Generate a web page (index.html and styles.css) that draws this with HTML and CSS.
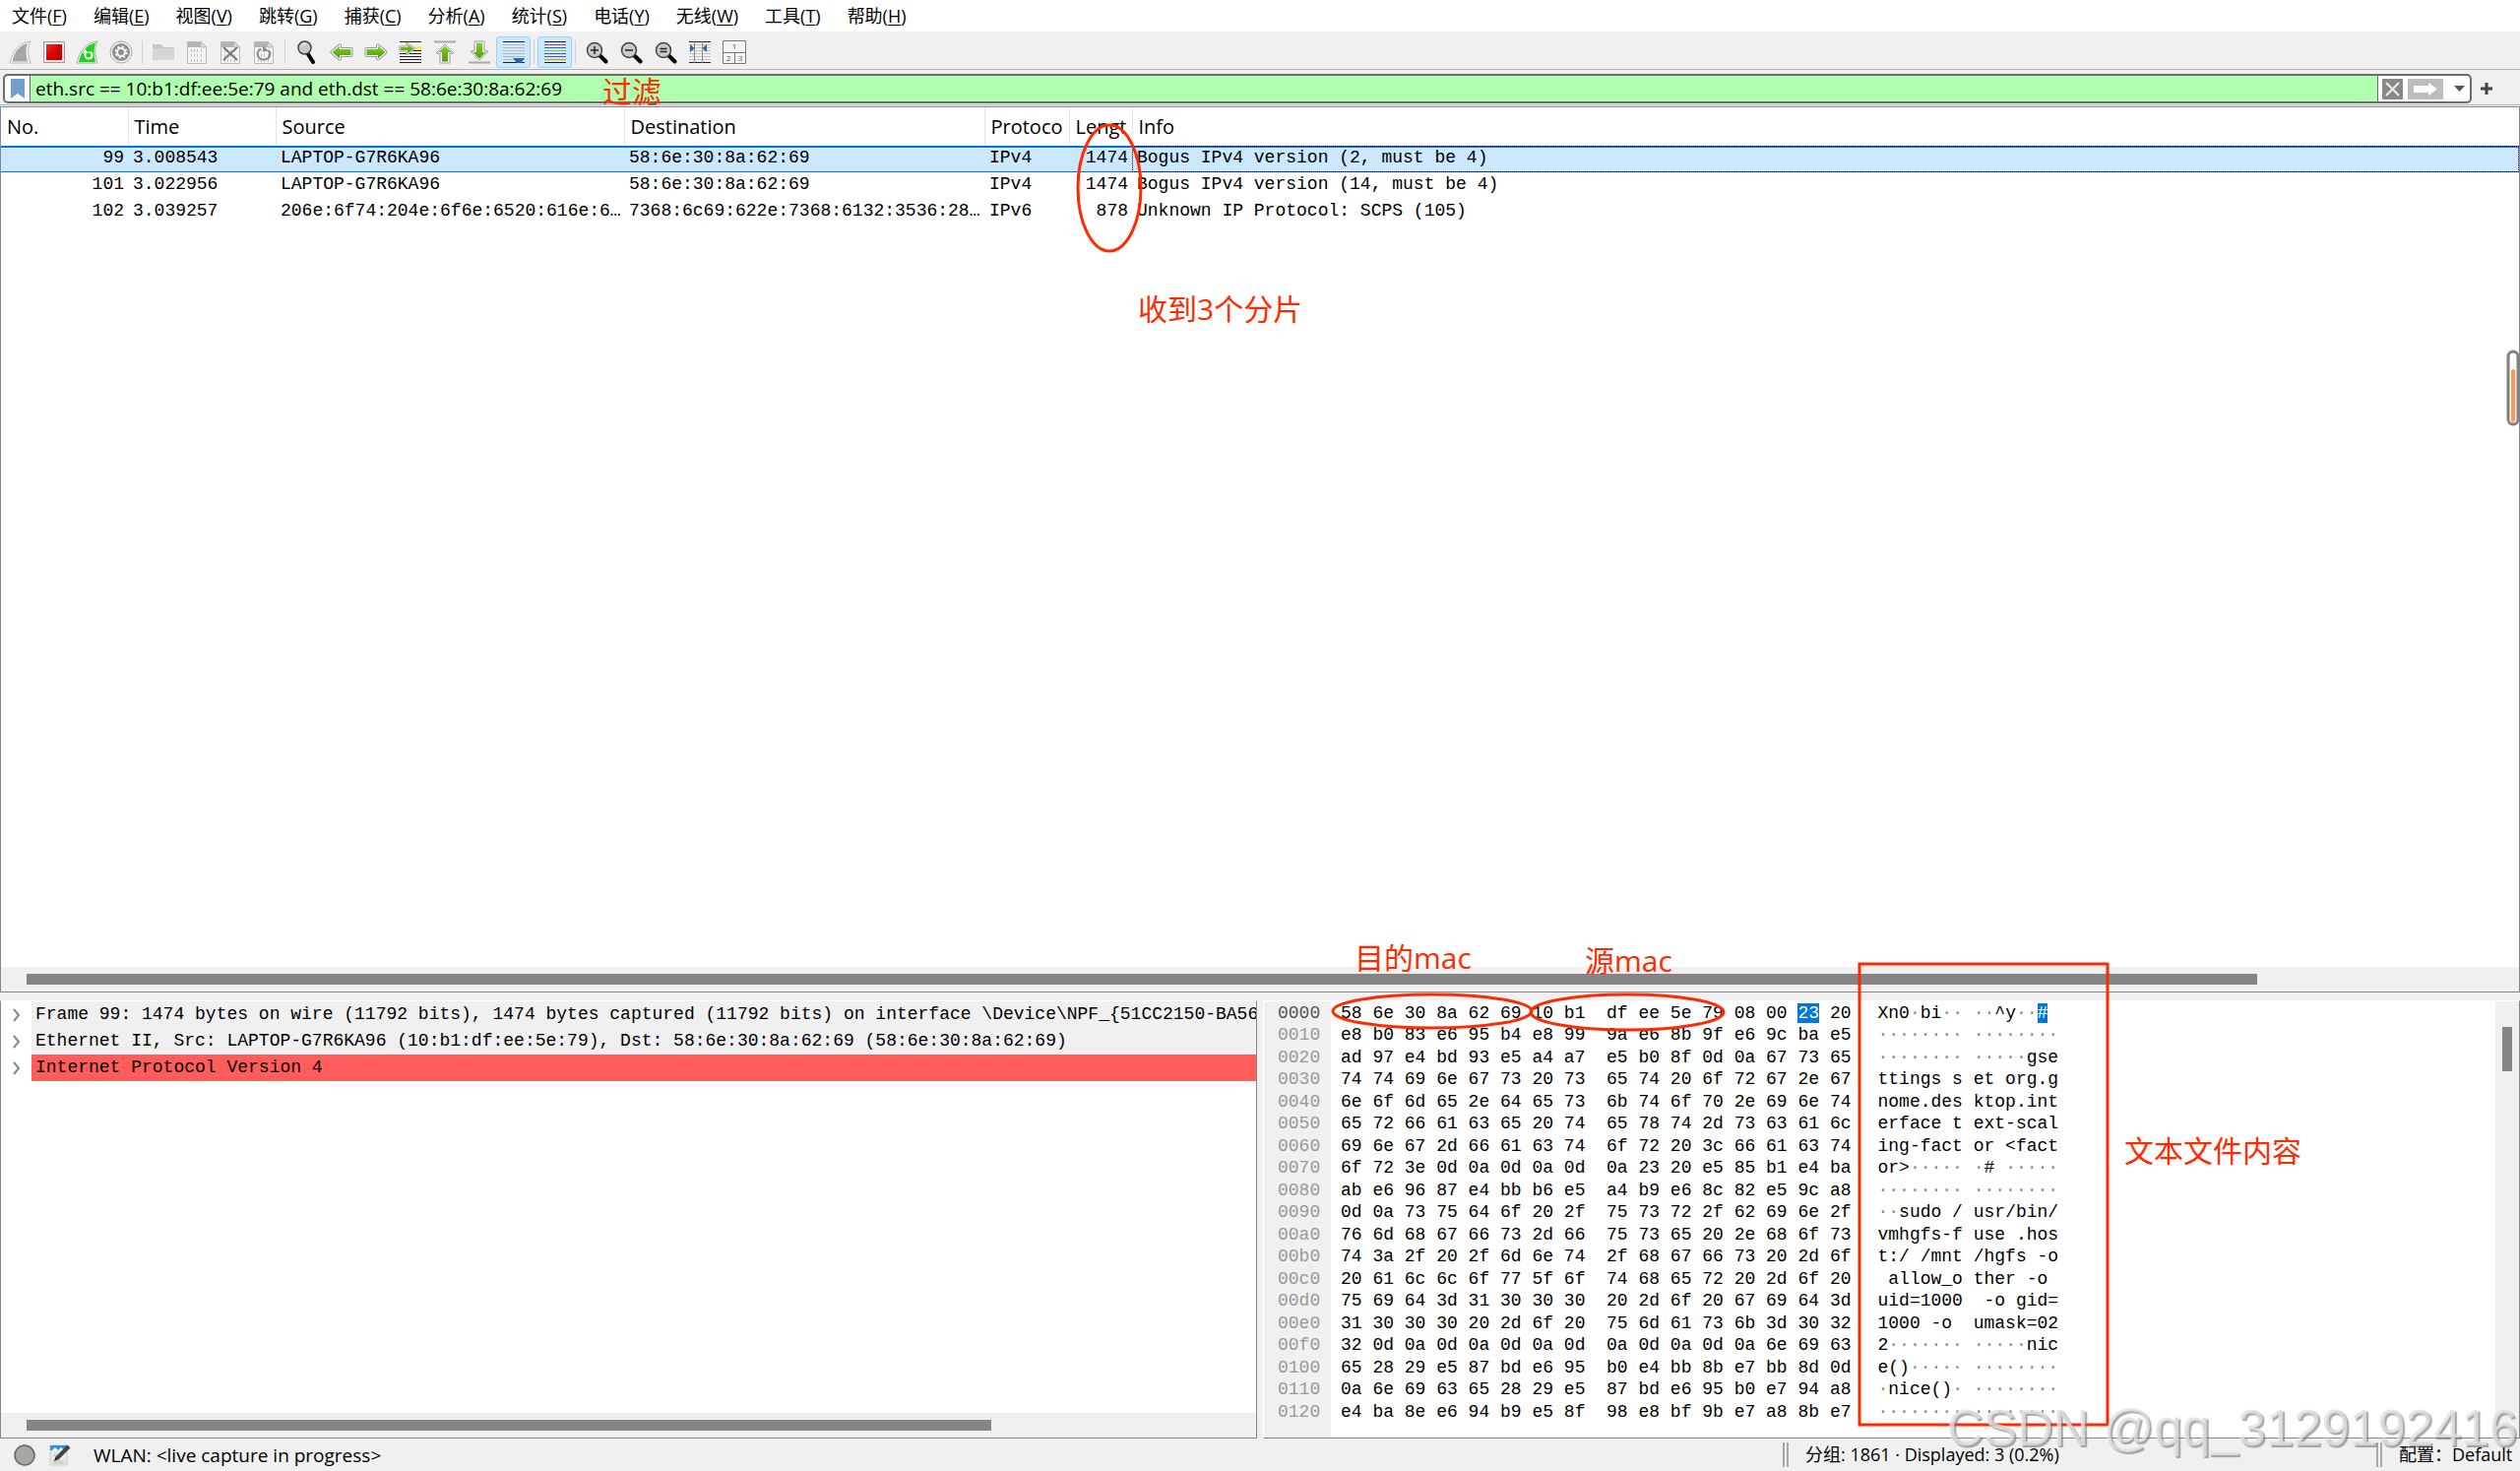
FILE: index.html
```html
<!DOCTYPE html>
<html lang="zh-CN">
<head>
<meta charset="utf-8">
<title>WLAN</title>
<link rel="stylesheet" href="styles.css">
</head>
<body>
<svg class="defs" width="0" height="0" aria-hidden="true">
  <defs>
    <linearGradient id="green" x1="0" y1="0" x2="0" y2="1"><stop offset="0" stop-color="#86cf2a"/><stop offset="1" stop-color="#4f9a0a"/></linearGradient>
    <linearGradient id="red" x1="0" y1="0" x2="1" y2="1"><stop offset="0" stop-color="#e83030"/><stop offset=".5" stop-color="#e00000"/><stop offset="1" stop-color="#c00000"/></linearGradient>
    <g id="doc"><path d="M2.500 1.500h14l5 5v17h-19z" fill="#f3f3f3" stroke="#b9b9b9"/><path d="M3 2h13v5H3z" fill="#b4b4b4"/><path d="M16 1.500v5.500h5.500z" fill="#e4e4e4" stroke="#b9b9b9"/><path d="M6.500 9v3m3-3v3m3-3v3m4-3v3M6.500 14v3m3-3v3m3-3v3m4-3v3M6.500 19v3m3-3v3m3-3v3m4-3v3" stroke="#bdbdbd"/></g>
    <g id="lens"><path d="M15.500 15.500l6 6" stroke="#000" stroke-width="4" stroke-linecap="round"/><circle cx="10" cy="10" r="7.500" fill="#c9c9c9" stroke="#444" stroke-width="1.500"/></g>
    <path id="arrow" d="M2.500 12L10 5.500v3.500h11.500v6H10v3.500z" stroke-linejoin="round"/>
  </defs>
</svg>
<div class="app">
  <nav class="menubar">
    <button>文件(<u>F</u>)</button><button>编辑(<u>E</u>)</button><button>视图(<u>V</u>)</button><button>跳转(<u>G</u>)</button><button>捕获(<u>C</u>)</button><button>分析(<u>A</u>)</button><button>统计(<u>S</u>)</button><button>电话(<u>Y</u>)</button><button>无线(<u>W</u>)</button><button>工具(<u>T</u>)</button><button>帮助(<u>H</u>)</button>
  </nav>

  <div class="toolbar">
    <div class="tools narrow">
      <button aria-label="开始"><svg viewBox="0 0 24 24"><path d="M1 23C4 10 11 2 22 1c-3 6-3 14 0 22z" fill="#f6f6f6" stroke="#bbb"/><path d="M3.500 21.500C6 11 11 5 19 3c-2 6-2 12 0 18.500z" fill="#a6a6a6"/></svg></button>
      <button aria-label="停止"><svg viewBox="0 0 24 24"><path d="M1.500 1.500h21v21h-21z" fill="#eee" stroke="#999"/><path d="M4 4h16v16H4z" fill="url(#red)"/></svg></button>
      <button aria-label="重新开始"><svg viewBox="0 0 24 24"><path d="M1 23C4 10 11 2 22 1c-3 6-3 14 0 22z" fill="#f6f6f6" stroke="#aaa"/><path d="M3 22C5.500 11 11 4.500 20 2.500c-2 6-2 13 0 19.500z" fill="#1fd614"/><path d="M9.500 12v3c0 5 7 4.500 7 0 0-2-1-3-3-3" fill="none" stroke="#fff" stroke-width="2"/><path d="M7 13l2.500-4L13 13z" fill="#fff"/></svg></button>
      <button aria-label="捕获选项"><svg viewBox="0 0 24 24"><circle cx="12" cy="12" r="11" fill="#f2f2f2" stroke="#aaa"/><circle cx="12" cy="12" r="9" fill="#8f8f8f"/><circle cx="12" cy="12" r="4" fill="none" stroke="#f4f4f4" stroke-width="2"/><circle cx="12" cy="12" r="5.500" fill="none" stroke="#f4f4f4" stroke-width="2" stroke-dasharray="2.160 2.160"/></svg></button>
    </div>
    <span class="sep"></span>
    <div class="tools narrow">
      <button aria-label="打开"><svg viewBox="0 0 24 24"><path d="M1 4h9l2 3h11v13H1z" fill="#c6c6c6"/><path d="M1 8h22v12H1z" fill="#d6d6d6"/></svg></button>
      <button aria-label="保存"><svg viewBox="0 0 24 24"><use href="#doc"/></svg></button>
      <button aria-label="关闭"><svg viewBox="0 0 24 24"><use href="#doc"/><path d="M5 7l14 13M19 7L5 20" stroke="#777" stroke-width="2"/></svg></button>
      <button aria-label="重新加载"><svg viewBox="0 0 24 24"><use href="#doc"/><path d="M9 8.500c-6 4-3 11.500 3.500 11 6-.5 7-6 4.500-9" fill="none" stroke="#8a8a8a" stroke-width="2"/><path d="M11 5v6h6z" fill="#8a8a8a"/></svg></button>
    </div>
    <span class="sep"></span>
    <div class="tools">
      <button aria-label="查找"><svg viewBox="0 0 24 24"><path d="M13 14l5 8" stroke="#000" stroke-width="4" stroke-linecap="round"/><circle cx="9.500" cy="7.500" r="6.500" fill="#c9c9c9" stroke="#444" stroke-width="1.500"/><path d="M6 6c1-2 3-3 5-2" stroke="#fff" fill="none"/></svg></button>
      <button aria-label="上一分组"><svg viewBox="0 0 24 24"><use href="#arrow" stroke="#999" stroke-width="4"/><use href="#arrow" stroke="#fff" stroke-width="2"/><use href="#arrow" fill="url(#green)"/></svg></button>
      <button aria-label="下一分组"><svg class="flip" viewBox="0 0 24 24"><use href="#arrow" stroke="#999" stroke-width="4"/><use href="#arrow" stroke="#fff" stroke-width="2"/><use href="#arrow" fill="url(#green)"/></svg></button>
      <button aria-label="转到分组"><svg viewBox="0 0 24 24"><path d="M1 1.500h22M1 13.500h22M1 16.500h22M1 19.500h22M1 22.500h22M1 10.500h22" stroke="#222"/><path d="M17 6h6v4h-6z" fill="#fce94f"/><path d="M1 6h7V2l9 6.500L8 15v-4H1z" fill="#fff" stroke="#999"/><path d="M2 7h7V4l6.500 4.500L9 13v-3H2z" fill="url(#green)"/></svg></button>
      <button aria-label="首个分组"><svg viewBox="0 0 24 24"><path d="M1 1.500h22" stroke="#aaa" stroke-width="2"/><path d="M12 4l9 9h-4v10H7V13H3z" fill="#fff" stroke="#999"/><path d="M12 5.500l6.500 6.500H15v9.500H9V12H5.500z" fill="url(#green)"/></svg></button>
      <button aria-label="最后分组"><svg viewBox="0 0 24 24"><path d="M1 22.500h22" stroke="#aaa" stroke-width="2"/><path d="M12 20l9-9h-4V1H7v10H3z" fill="#fff" stroke="#999"/><path d="M12 18.500l6.500-6.500H15V2.500H9V12H5.500z" fill="url(#green)"/></svg></button>
      <button class="on" aria-label="自动滚动"><svg viewBox="0 0 24 24"><path d="M1 1.500h22M1 22.500h22" stroke="#222"/><path d="M1 4.500h22M1 7.500h22M1 10.500h22M1 13.500h22M1 16.500h22M1 19.500h22" stroke="#b9b9ad"/><path d="M11 18h12l-4 5h-4z" fill="#2c62ad"/></svg></button>
    </div>
    <span class="sep tight"></span>
    <div class="tools">
      <button class="on" aria-label="着色"><svg viewBox="0 0 24 24"><path d="M1 1.500h22M1 22.500h22" stroke="#222"/><path d="M1 4.500h22" stroke="#ef2929"/><path d="M1 7.500h22" stroke="#3465a4"/><path d="M1 10.500h22" stroke="#73d216"/><path d="M1 13.500h22" stroke="#3465a4"/><path d="M1 16.500h22" stroke="#75507b"/><path d="M1 19.500h22" stroke="#c4a000"/></svg></button>
    </div>
    <span class="sep tight"></span>
    <div class="tools">
      <button aria-label="放大"><svg viewBox="0 0 24 24"><use href="#lens"/><path d="M6 10h8M10 6v8" stroke="#222" stroke-width="1.500"/></svg></button>
      <button aria-label="缩小"><svg viewBox="0 0 24 24"><use href="#lens"/><path d="M6 10h8" stroke="#222" stroke-width="1.500"/></svg></button>
      <button aria-label="正常大小"><svg viewBox="0 0 24 24"><use href="#lens"/><path d="M6.500 8.500h7M6.500 11.500h7" stroke="#222" stroke-width="1.500"/></svg></button>
      <button aria-label="调整列宽"><svg viewBox="0 0 24 24"><path d="M1 1.500h22M1 22.500h22" stroke="#222"/><path d="M1 4.500h22M1 7.500h22M1 10.500h22M1 13.500h22M1 16.500h22M1 19.500h22" stroke="#c4c4ba"/><path d="M6.500 1v22M14.500 1v22" stroke="#888"/><path d="M2 4v8l4.500-4zM19 4v8l-4.500-4z" fill="#2c62ad"/></svg></button>
      <button aria-label="布局"><svg viewBox="0 0 24 24"><path d="M.5.500h23v23H.5zM.5 12.500h23M12.500 12.500v11" fill="#f4f4f4" stroke="#777"/><text x="12" y="9" class="tiny">1</text><text x="6" y="21" class="tiny">2</text><text x="18" y="21" class="tiny">3</text></svg></button>
    </div>
  </div>

  <div class="filterbar">
    <div class="filterbox">
      <button class="bookmark" aria-label="书签"><svg width="14" height="20" viewBox="0 0 14 20"><path d="M0 0h14v20l-7-5-7 5z" fill="#729fcf"/></svg></button>
      <input class="filter" type="text" aria-label="显示过滤器" value="eth.src == 10:b1:df:ee:5e:79 and eth.dst == 58:6e:30:8a:62:69">
      <div class="actions">
        <button class="clear" aria-label="清除"><svg width="21" height="21" viewBox="0 0 21 21"><rect width="21" height="21" rx="1" fill="#888a85"/><path d="M4 4l13 13M17 4L4 17" stroke="#eee" stroke-width="2"/></svg></button>
        <button class="apply" aria-label="应用"><svg width="36" height="21" viewBox="0 0 36 21"><rect width="36" height="21" rx="1" fill="#bdbdbd"/><path d="M6 7h15V4l9 6.500-9 6.500v-3H6z" fill="#fff"/></svg></button>
        <button class="history" aria-label="历史"><svg width="11" height="6" viewBox="0 0 11 6"><path d="M0 0h11L5.500 6z" fill="#555"/></svg></button>
      </div>
    </div>
    <button class="add" aria-label="添加"><svg width="12" height="12" viewBox="0 0 12 12"><path d="M0 6h12M6 0v12" stroke="#444" stroke-width="3"/></svg></button>
  </div>

  <main class="panes">
    <section class="packets">
      <table>
        <colgroup><col class="c-no"><col class="c-time"><col class="c-src"><col class="c-dst"><col class="c-proto"><col class="c-len"><col></colgroup>
        <thead><tr><th>No.</th><th>Time</th><th>Source</th><th>Destination</th><th>Protoco</th><th>Lengt</th><th>Info</th></tr></thead>
        <tbody>
          <tr class="selected"><td class="num">99</td><td>3.008543</td><td>LAPTOP-G7R6KA96</td><td>58:6e:30:8a:62:69</td><td>IPv4</td><td class="num">1474</td><td>Bogus IPv4 version (2, must be 4)</td></tr>
          <tr><td class="num">101</td><td>3.022956</td><td>LAPTOP-G7R6KA96</td><td>58:6e:30:8a:62:69</td><td>IPv4</td><td class="num">1474</td><td>Bogus IPv4 version (14, must be 4)</td></tr>
          <tr><td class="num">102</td><td>3.039257</td><td>206e:6f74:204e:6f6e:6520:616e:6…</td><td>7368:6c69:622e:7368:6132:3536:28…</td><td>IPv6</td><td class="num">878</td><td>Unknown IP Protocol: SCPS (105)</td></tr>
        </tbody>
      </table>
      <div class="hscroll"><div class="hthumb list-thumb"></div></div>
    </section>

    <div class="lower">
      <section class="tree">
        <ul>
          <li><svg width="8" height="14" viewBox="0 0 8 14"><path d="M1 1l5 6-5 6" fill="none" stroke="#888" stroke-width="2"/></svg><span>Frame 99: 1474 bytes on wire (11792 bits), 1474 bytes captured (11792 bits) on interface \Device\NPF_{51CC2150-BA56-</span></li>
          <li><svg width="8" height="14" viewBox="0 0 8 14"><path d="M1 1l5 6-5 6" fill="none" stroke="#888" stroke-width="2"/></svg><span>Ethernet II, Src: LAPTOP-G7R6KA96 (10:b1:df:ee:5e:79), Dst: 58:6e:30:8a:62:69 (58:6e:30:8a:62:69)</span></li>
          <li class="error"><svg width="8" height="14" viewBox="0 0 8 14"><path d="M1 1l5 6-5 6" fill="none" stroke="#888" stroke-width="2"/></svg><span>Internet Protocol Version 4</span></li>
        </ul>
        <div class="hscroll"><div class="hthumb tree-thumb"></div></div>
      </section>
      <section class="bytes">
        <table>
          <tr class="current"><th>0000</th><td>58 6e 30 8a 62 69 10 b1  df ee 5e 79 08 00 <mark>23</mark> 20</td><td>Xn0<i>·</i>bi<i>··</i> <i>··</i>^y<i>··</i><mark>#</mark> </td></tr>
          <tr><th>0010</th><td>e8 b0 83 e6 95 b4 e8 99  9a e6 8b 9f e6 9c ba e5</td><td><i>········ ········</i></td></tr>
          <tr><th>0020</th><td>ad 97 e4 bd 93 e5 a4 a7  e5 b0 8f 0d 0a 67 73 65</td><td><i>········ ·····</i>gse</td></tr>
          <tr><th>0030</th><td>74 74 69 6e 67 73 20 73  65 74 20 6f 72 67 2e 67</td><td>ttings s et org.g</td></tr>
          <tr><th>0040</th><td>6e 6f 6d 65 2e 64 65 73  6b 74 6f 70 2e 69 6e 74</td><td>nome.des ktop.int</td></tr>
          <tr><th>0050</th><td>65 72 66 61 63 65 20 74  65 78 74 2d 73 63 61 6c</td><td>erface t ext-scal</td></tr>
          <tr><th>0060</th><td>69 6e 67 2d 66 61 63 74  6f 72 20 3c 66 61 63 74</td><td>ing-fact or &lt;fact</td></tr>
          <tr><th>0070</th><td>6f 72 3e 0d 0a 0d 0a 0d  0a 23 20 e5 85 b1 e4 ba</td><td>or&gt;<i>····· ·</i># <i>·····</i></td></tr>
          <tr><th>0080</th><td>ab e6 96 87 e4 bb b6 e5  a4 b9 e6 8c 82 e5 9c a8</td><td><i>········ ········</i></td></tr>
          <tr><th>0090</th><td>0d 0a 73 75 64 6f 20 2f  75 73 72 2f 62 69 6e 2f</td><td><i>··</i>sudo / usr/bin/</td></tr>
          <tr><th>00a0</th><td>76 6d 68 67 66 73 2d 66  75 73 65 20 2e 68 6f 73</td><td>vmhgfs-f use .hos</td></tr>
          <tr><th>00b0</th><td>74 3a 2f 20 2f 6d 6e 74  2f 68 67 66 73 20 2d 6f</td><td>t:/ /mnt /hgfs -o</td></tr>
          <tr><th>00c0</th><td>20 61 6c 6c 6f 77 5f 6f  74 68 65 72 20 2d 6f 20</td><td> allow_o ther -o </td></tr>
          <tr><th>00d0</th><td>75 69 64 3d 31 30 30 30  20 2d 6f 20 67 69 64 3d</td><td>uid=1000  -o gid=</td></tr>
          <tr><th>00e0</th><td>31 30 30 30 20 2d 6f 20  75 6d 61 73 6b 3d 30 32</td><td>1000 -o  umask=02</td></tr>
          <tr><th>00f0</th><td>32 0d 0a 0d 0a 0d 0a 0d  0a 0d 0a 0d 0a 6e 69 63</td><td>2<i>······· ·····</i>nic</td></tr>
          <tr><th>0100</th><td>65 28 29 e5 87 bd e6 95  b0 e4 bb 8b e7 bb 8d 0d</td><td>e()<i>····· ········</i></td></tr>
          <tr><th>0110</th><td>0a 6e 69 63 65 28 29 e5  87 bd e6 95 b0 e7 94 a8</td><td><i>·</i>nice()<i>· ········</i></td></tr>
          <tr><th>0120</th><td>e4 ba 8e e6 94 b9 e5 8f  98 e8 bf 9b e7 a8 8b e7</td><td><i>········ ········</i></td></tr>
        </table>
        <div class="vscroll"><div class="vthumb"></div></div>
      </section>
    </div>
  </main>

  <footer class="status">
    <svg width="22" height="22" viewBox="0 0 22 22"><circle cx="11" cy="11" r="10" fill="#a6a8a2" stroke="#666" stroke-width="1.500"/></svg>
    <svg class="note" width="22" height="22" viewBox="0 0 22 22"><path d="M1 1h17v20H1z" fill="#e8e8e4" stroke="#ccc"/><path d="M1 1h17v5H1z" fill="#2f93cf"/><path d="M3 6l3-3 3 3 3-3 3 3" fill="#fff"/><path d="M4 17h11M4 19h11M4 11h4" stroke="#bbb"/><path d="M20 2L8 14" stroke="#444" stroke-width="4"/><path d="M6.500 12.500L5 17l4.500-2z" fill="#222"/></svg>
    <span class="iface">WLAN: &lt;live capture in progress&gt;</span>
    <span class="cell count">分组: 1861 · Displayed: 3 (0.2%)</span>
    <span class="cell profile">配置：Default</span>
  </footer>

  <div class="notes">
    <svg class="marks" width="2560" height="1494" fill="none" stroke="#ff2a00" stroke-width="3">
      <ellipse cx="1127" cy="191" rx="32" ry="64"/>
      <ellipse cx="1455" cy="1027" rx="101" ry="17"/>
      <ellipse cx="1653" cy="1028" rx="98" ry="18"/>
      <rect x="1889" y="979" width="252" height="468"/>
      <rect x="2548" y="357" width="10" height="74" rx="5" fill="#fff" stroke="#808080"/>
      <path d="M2553 377v50" stroke="#ff9a50" stroke-width="4" stroke-linecap="round"/>
    </svg>
    <span class="note-text n-filter">过滤</span>
    <span class="note-text n-frag">收到3个分片</span>
    <span class="note-text n-dst">目的mac</span>
    <span class="note-text n-src">源mac</span>
    <span class="note-text n-body">文本文件内容</span>
    <span class="watermark">CSDN @qq_3129192416</span>
  </div>
</div>
</body>
</html>
```
FILE: styles.css
```css
* { box-sizing: border-box; }
body { margin: 0; background: #f0f0f0; color: #000; font: 18px/24px "Open Sans", "Noto Sans CJK SC", sans-serif; }
button { border: 0; padding: 0; margin: 0; background: none; font: inherit; color: inherit; }
table { border-collapse: collapse; border-spacing: 0; }
svg { display: block; flex: none; }
.defs { position: absolute; }
.app { position: relative; display: flex; flex-direction: column; height: 100vh; overflow: hidden; }

.menubar { display: flex; height: 33px; background: #fff; border-bottom: 1px solid #f3f3f3; }
.menubar button { padding: 0 15px 0 12px; white-space: nowrap; }
.menubar u { text-underline-offset: 2px; }

.toolbar { display: flex; align-items: center; height: 38px; padding: 2px 0 0 4px; border-bottom: 1px solid #b4b4b4; }
.tools { display: flex; }
.tools button { display: grid; place-items: center; width: 35px; height: 32px; border: 1px solid transparent; border-radius: 3px; }
.tools.narrow button { width: 34px; }
.tools button.on { background: #cce8ff; border-color: #99d1ff; }
.tools svg { width: 24px; height: 24px; }
.flip { transform: scaleX(-1); }
.tiny { font-size: 8px; text-anchor: middle; fill: #555; }
.sep { width: 9px; height: 24px; background: linear-gradient(#d0d0d0, #d0d0d0) center / 1px 100% no-repeat; }
.sep.tight { width: 7px; }

.filterbar { display: flex; align-items: center; height: 36px; padding: 4px 0 1px 3px; border-bottom: 1px solid #b4b4b4; }
.filterbox { display: flex; flex: 1; height: 30px; background: #fff; border: 2px solid #6c6c6c; border-radius: 5px; overflow: hidden; }
.bookmark { display: grid; place-items: center; width: 26px; border-right: 1px solid #6c6c6c; }
.filter { flex: 1; min-width: 0; padding: 0 0 0 5px; border: 0; outline: 0; background: #afffaf; font: inherit; font-size: 19px; }
.actions { display: flex; align-items: center; gap: 5px; width: 94px; padding-left: 4px; border-left: 1px solid #6c6c6c; }
.history { padding-left: 6px; }
.add { width: 49px; padding-left: 9px; }

.panes { display: flex; flex-direction: column; flex: 1; min-height: 0; gap: 8px; padding-top: 1px; }
.packets { display: flex; flex-direction: column; flex: 1; background: #fff; border: 1px solid #828790; }
.packets table { table-layout: fixed; width: 100%; }
.c-no { width: 129px; } .c-time { width: 150px; } .c-src { width: 354px; } .c-dst { width: 366px; } .c-proto { width: 86px; } .c-len { width: 64px; }
.packets th { height: 39px; padding: 1px 0 0 6px; border-right: 1px solid #e5e5e5; font-weight: 400; font-size: 20px; text-align: left; overflow: hidden; white-space: nowrap; }
.packets th:last-child { border-right: 0; }
.packets td { height: 27px; padding: 0 0 2px 5px; font: 18px/25px "Liberation Mono", "Noto Sans CJK SC", monospace; white-space: nowrap; overflow: hidden; }
.packets .num { text-align: right; padding-right: 4px; }
.selected td { background: #cce8ff; box-shadow: inset 0 2px #0078d7, inset 0 -1px #0078d7; }
.selected td:last-child { outline: 1px dotted #003; outline-offset: -1px; }

.hscroll { height: 25px; margin-top: auto; padding: 7px 0 0 26px; background: #f0f0f0; }
.hthumb { height: 11px; background: #858585; }
.list-thumb { width: 89.5%; }
.tree-thumb { width: 78.5%; }

.lower { display: grid; grid-template-columns: minmax(0, 1fr) minmax(0, 1fr); gap: 6px; }
.tree { display: flex; flex-direction: column; background: #fff; border: 1px solid #828790; border-top-color: #fff; overflow: hidden; }
.tree ul { margin: 0; padding: 0; list-style: none; font: 18px/27px "Liberation Mono", monospace; }
.tree li { display: flex; align-items: center; gap: 11px; padding-left: 12px; height: 27px; }
.tree li span { flex: 1; min-width: 0; padding-left: 4px; height: 27px; line-height: 27px; background: #f0f0f0; white-space: pre; overflow: hidden; }
.tree .error span { background: #ff5c5c; }

.bytes { display: flex; background: linear-gradient(90deg, #f0f0f0 68px, #fff 68px); border: 1px solid #828790; border-top-color: #fff; border-left-color: #fff; }
.bytes table { margin-bottom: 15px; font: 18px/22px "Liberation Mono", monospace; }
.bytes tr { height: 22px; }
.bytes tr:nth-child(odd) { height: 23px; }
.bytes th { width: 68px; padding: 0 0 0 14px; color: #999; font-weight: 400; text-align: left; }
.bytes .current th { color: #555; }
.bytes td { padding: 0 0 0 10px; white-space: pre; }
.bytes td:last-child { padding-left: 27px; }
.bytes i { color: #888; font-style: normal; }
.bytes mark { background: #0078d7; color: #fff; }
.vscroll { width: 24px; margin-left: auto; padding: 26px 0 0 7px; background: #f0f0f0; }
.vthumb { width: 10px; height: 45px; background: #858585; }

.status { display: flex; align-items: center; height: 33px; padding-left: 14px; white-space: nowrap; }
.note { margin-left: 14px; }
.iface { flex: 1; padding-left: 23px; font-size: 19px; }
.cell { height: 25px; padding-left: 17px; border-left: 6px double #a8a8a8; }
.count { width: 603px; }
.profile { width: 146px; }

.notes { position: absolute; inset: 0; pointer-events: none; overflow: hidden; }
.note-text { position: absolute; color: #ff2a00; font-size: 30px; line-height: 36px; white-space: nowrap; }
.n-filter { left: 612px; top: 75px; }
.n-frag { left: 1156px; top: 296px; }
.n-dst { left: 1376px; top: 955px; }
.n-src { left: 1610px; top: 958px; }
.n-body { left: 2158px; top: 1151px; }
.watermark { position: absolute; right: 3px; top: 1422px; font: 51px/58px "Liberation Sans", sans-serif; color: rgba(225, 225, 225, 0.8); text-shadow: 2px 2px 1px rgba(110, 110, 110, 0.6); white-space: nowrap; }
```
